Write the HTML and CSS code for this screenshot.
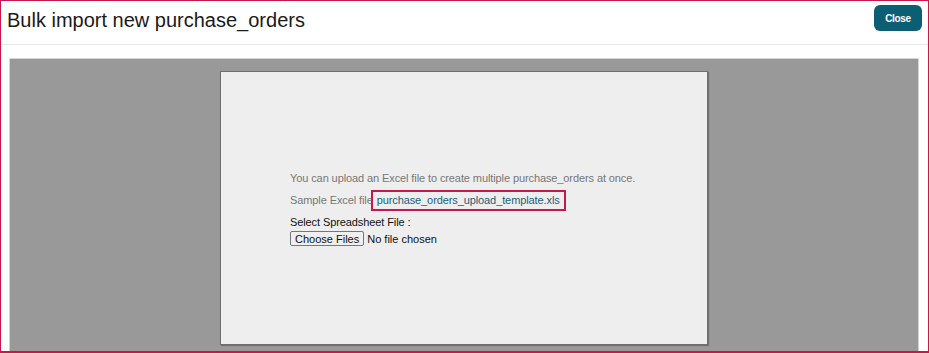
FILE: index.html
```html
<!DOCTYPE html>
<html lang="en">
<head>
    <meta charset="UTF-8">
    <meta name="viewport" content="width=device-width, initial-scale=1.0">
    <title>Bulk import</title>
    <link rel="stylesheet" href="styles.css">
</head>
<body>
    <div class="modal">
        <div class="modal-header">
            <h1>Bulk import new purchase_orders</h1>
            <button class="close-btn">Close</button>
        </div>
        <div class="modal-body">
            <div class="backdrop">
                <div class="upload-panel">
                    <p class="intro">You can upload an Excel file to create multiple purchase_orders at once.</p>
                    <p class="sample">Sample Excel file <a href="#" class="template-link">purchase_orders_upload_template.xls</a></p>
                    <label class="select-label" for="sheet">Select Spreadsheet File :</label>
                    <input type="file" id="sheet" multiple>
                </div>
            </div>
        </div>
    </div>
</body>
</html>
```

FILE: styles.css
```css
body {
    margin: 0;
    font-family: 'Liberation Sans', Arial, sans-serif;
    background: #fff;
}

.modal {
    width: 929px;
    height: 353px;
    box-sizing: border-box;
    border: 1px solid #c8174a;
    border-bottom-width: 2px;
    overflow: hidden;
    background: #fff;
}

.modal-header {
    height: 43px;
    display: flex;
    justify-content: space-between;
    align-items: flex-start;
    border-bottom: 1px solid #e6e6e6;
    padding: 0 6px 0 6px;
}

.modal-header h1 {
    margin: 0;
    padding-top: 8px;
    font-weight: normal;
    font-size: 20px;
    color: #1a1a1a;
}

.close-btn {
    margin-top: 4px;
    width: 48px;
    height: 26px;
    flex-shrink: 0;
    background: #0b5e73;
    color: #fff;
    border: none;
    border-radius: 6px;
    font-family: 'Liberation Sans', Arial, sans-serif;
    font-weight: bold;
    font-size: 10px;
    letter-spacing: -0.3px;
    cursor: pointer;
}

.modal-body {
    padding: 13px 9px 0 8px;
}

.backdrop {
    background: #999;
    border: 1px solid #d4d4d4;
    padding: 12px 0;
}

.upload-panel {
    box-sizing: border-box;
    width: 488px;
    height: 274px;
    margin: 0 auto;
    background: #eee;
    border: 1px solid #6e6e6e;
    box-shadow: 1px 1px 1px rgba(0, 0, 0, 0.25);
    padding: 99px 0 0 69px;
    font-size: 11px;
    letter-spacing: -0.1px;
}

.intro {
    margin: 0 0 5px 0;
    color: #777;
    line-height: 14px;
}

.sample {
    margin: 0 0 5px 0;
    color: #777;
    line-height: 20px;
}

.template-link {
    color: #1b5f7c;
    text-decoration: none;
    outline: 2px solid #c8174a;
    padding: 2px 4px 3px 4px;
    margin-left: -3px;
}

.select-label {
    display: block;
    color: #111;
    line-height: 14px;
}

input[type="file"] {
    font-family: 'Liberation Sans', Arial, sans-serif;
    font-size: 11px;
    color: #111;
    margin-top: 2px;
}

input[type="file"]::file-selector-button {
    font-family: 'Liberation Sans', Arial, sans-serif;
    font-size: 11px;
    height: 15px;
    padding: 0 4px;
    margin-right: 3px;
    background: #efefef;
    border: 1px solid #767676;
    border-radius: 2px;
    color: #111;
}
```
